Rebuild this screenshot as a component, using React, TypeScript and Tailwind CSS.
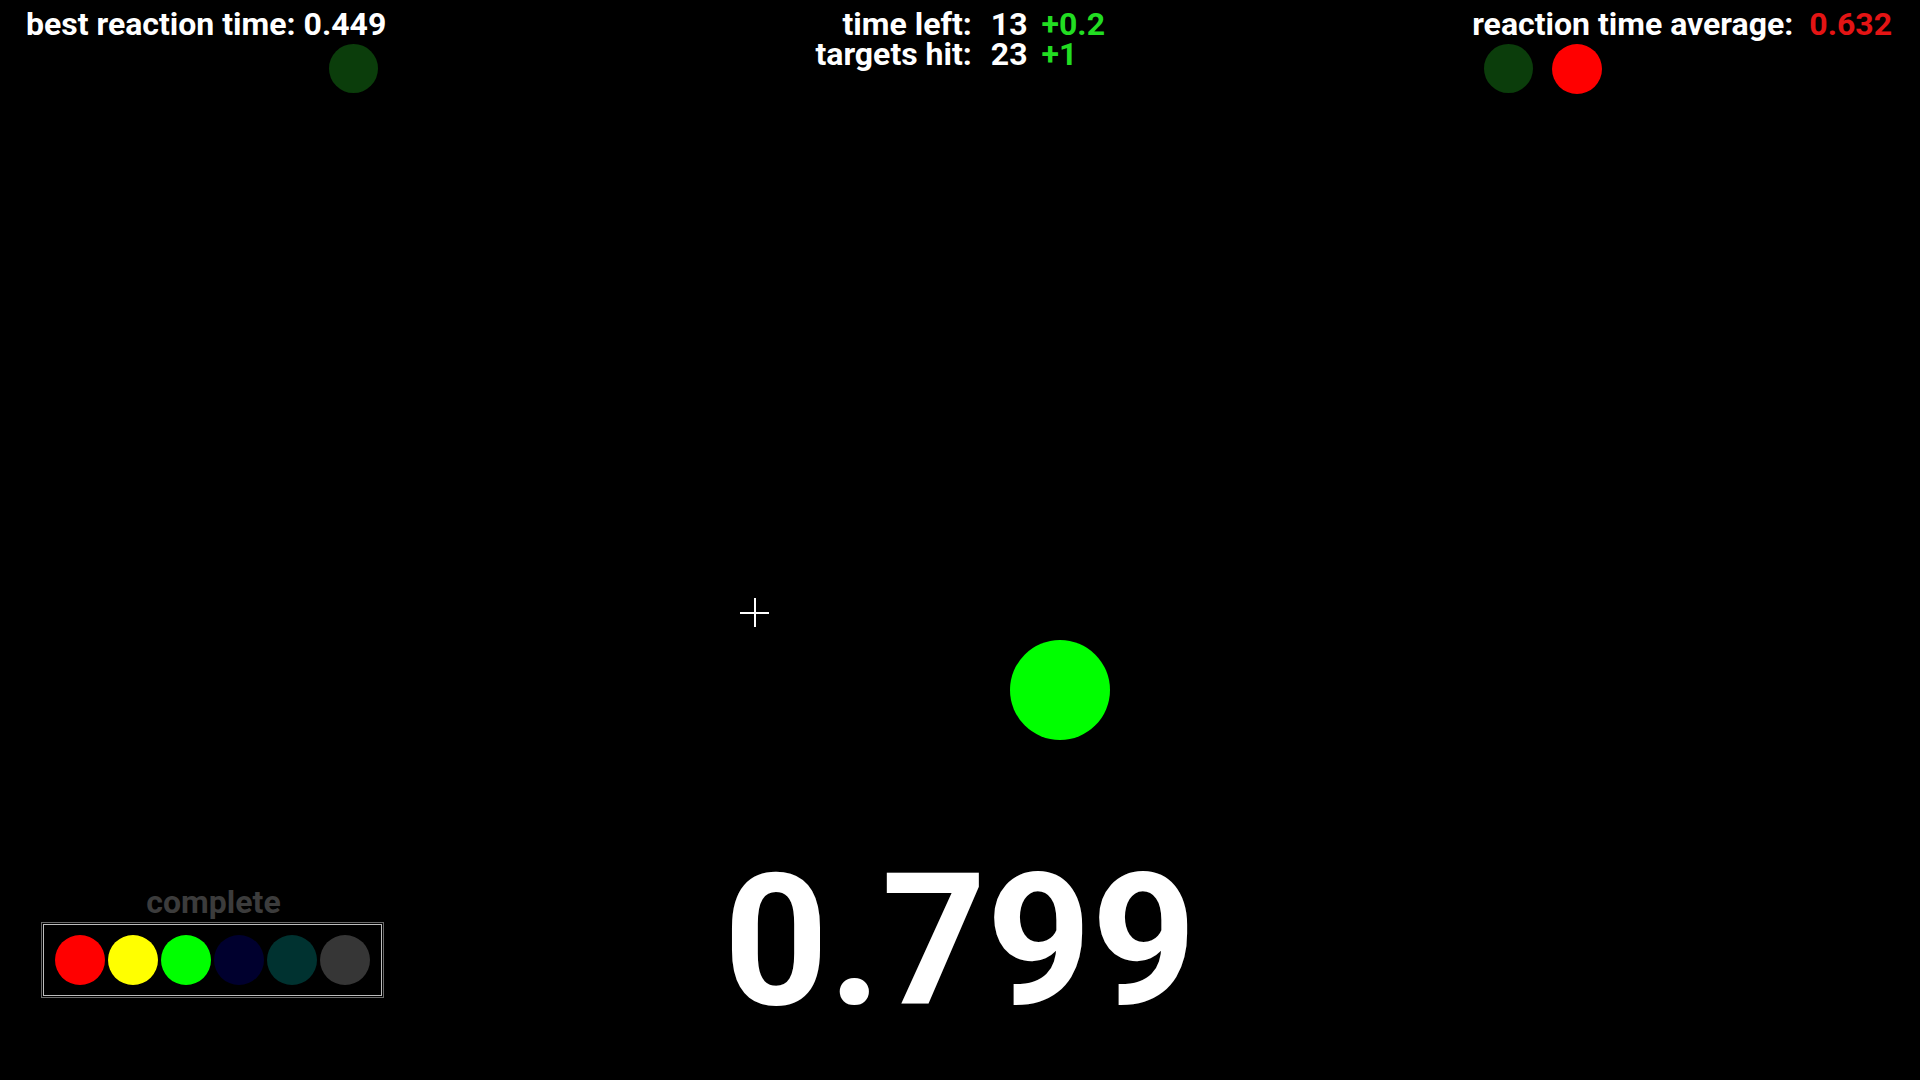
import React from "react";

const font = { fontFamily: "Roboto, 'Liberation Sans', sans-serif" };

export default function App() {
  return (
    <div
      className="relative w-[1920px] h-[1080px] bg-black overflow-hidden text-white font-bold"
      style={font}
    >
      {/* Top HUD */}
      <div className="flex justify-between items-start pt-[9px] pl-[26px] pr-[28px] text-[32px] leading-[30px]">
        <div className="flex flex-col items-end">
          <div>best reaction time: 0.449</div>
          <div className="mt-[5px] mr-[8px] w-[49px] h-[49px] rounded-full bg-[#0b3d0b]" />
        </div>
        <div className="grid grid-cols-[auto_auto_auto] gap-x-[14px] ml-[62px]">
          <div className="text-right pr-[5px]">time left:</div>
          <div>13</div>
          <div className="text-[#22dd22]">+0.2</div>
          <div className="text-right pr-[5px]">targets hit:</div>
          <div>23</div>
          <div className="text-[#22dd22]">+1</div>
        </div>
        <div className="flex flex-col items-start">
          <div>
            reaction time average:<span className="ml-[16px] text-[#e41414]">0.632</span>
          </div>
          <div className="flex gap-[19px] mt-[5px] ml-[12px]">
            <div className="w-[49px] h-[49px] rounded-full bg-[#0b3d0b]" />
            <div className="w-[50px] h-[50px] rounded-full bg-[#ff0000]" />
          </div>
        </div>
      </div>

      {/* Crosshair */}
      <div className="absolute left-[740px] top-[598px] w-[29px] h-[29px]">
        <div className="absolute left-0 top-[14px] w-[29px] h-[2px] bg-white" />
        <div className="absolute left-[14px] top-0 w-[2px] h-[29px] bg-white" />
      </div>

      {/* Target */}
      <div className="absolute left-[1010px] top-[640px] w-[100px] h-[100px] rounded-full bg-[#00ff00]" />

      {/* Big reaction time */}
      <div className="absolute left-0 right-0 top-[850px] text-center text-[183px] leading-none">
        0.799
      </div>

      {/* Color legend */}
      <div className="absolute left-[41px] top-[886px] flex flex-col items-center">
        <div className="text-[32px] leading-[32px] text-[#3c3c3c] mb-[4px] ml-[2px]">complete</div>
        <div className="border border-[#6a6a6a] p-px">
          <div className="border border-[#bdbdbd] flex gap-[3px] px-[11px] py-[10px]">
            <div className="w-[50px] h-[50px] rounded-full bg-[#ff0000]" />
            <div className="w-[50px] h-[50px] rounded-full bg-[#ffff00]" />
            <div className="w-[50px] h-[50px] rounded-full bg-[#00ff00]" />
            <div className="w-[50px] h-[50px] rounded-full bg-[#00002e]" />
            <div className="w-[50px] h-[50px] rounded-full bg-[#003230]" />
            <div className="w-[50px] h-[50px] rounded-full bg-[#363636]" />
          </div>
        </div>
      </div>
    </div>
  );
}
